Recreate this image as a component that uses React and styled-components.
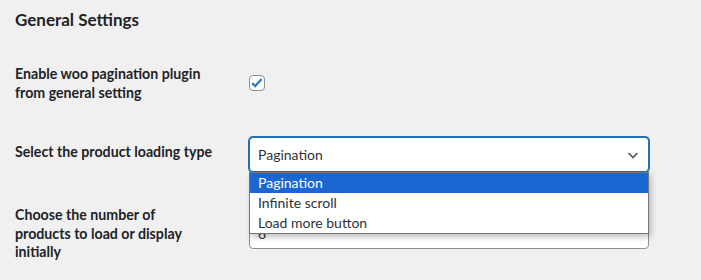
import React from "react";
import styled, { createGlobalStyle } from "styled-components";

const Global = createGlobalStyle`
  html, body { margin: 0; padding: 0; background: #f0f0f1; }
  body { font-family: Lato, "Noto Sans", sans-serif; color: #1d2327; }
`;

const Page = styled.div`
  padding: 7px 15px 0 15px;
  width: 701px;
  height: 280px;
  box-sizing: border-box;
  overflow: hidden;
`;

const Title = styled.h2`
  margin: 0;
  font-size: 17px;
  font-weight: 700;
  line-height: 26px;
  color: #1d2327;
`;

const Table = styled.div`
  display: grid;
  grid-template-columns: 234px 400px;
  margin-top: ${(p) => p.$top}px;
`;

const Label = styled.div`
  font-size: 14.2px;
  font-weight: 700;
  line-height: 18.5px;
  color: #1d2327;
  padding-top: ${(p) => p.$pt || 0}px;
  width: ${(p) => p.$w || 200}px;
`;

const Cell = styled.div`
  padding-top: ${(p) => p.$pt || 0}px;
`;

const Anchor = styled.div`
  position: relative;
`;

const Check = styled.span`
  display: flex;
  align-items: center;
  justify-content: center;
  width: 16px;
  height: 16px;
  box-sizing: border-box;
  border: 1px solid #8c8f94;
  border-radius: 4px;
  background: #fff;
`;

const SelectBox = styled.div`
  box-sizing: border-box;
  height: 35px;
  border: 1px solid #2271b1;
  box-shadow: 0 0 0 1px #2271b1;
  border-radius: 4px;
  background: #fff;
  display: flex;
  align-items: center;
  justify-content: space-between;
  padding: 0 9px 0 8px;
  font-size: 14px;
  color: #2c3338;
`;

const Menu = styled.ul`
  position: absolute;
  left: 0;
  top: 35px;
  width: 400px;
  margin: 0;
  padding: 0;
  list-style: none;
  box-sizing: border-box;
  border: 1px solid #767676;
  background: #fff;
  box-shadow: 2px 3px 6px rgba(0, 0, 0, 0.25);
  z-index: 5;
`;

const Item = styled.li`
  height: 20px;
  line-height: 20px;
  padding-left: 8px;
  font-size: 14px;
  color: ${(p) => (p.$active ? "#fff" : "#2c3338")};
  background: ${(p) => (p.$active ? "#1a67d2" : "#fff")};
`;

const Input = styled.div`
  box-sizing: border-box;
  height: 30px;
  border: 1px solid #8c8f94;
  border-radius: 4px;
  background: #fff;
  padding: 0 8px;
  font-size: 14px;
  line-height: 28px;
  color: #2c3338;
`;

export default function App() {
  return (
    <Page>
      <Global />
      <Title>General Settings</Title>
      <Table $top={32}>
        <Label $w={200}>Enable woo pagination plugin from general setting</Label>
        <Cell $pt={10}>
          <Check>
            <svg width="14" height="14" viewBox="0 0 14 14">
              <path d="M2.2 7.2l3 2.9L11.6 3" fill="none" stroke="#3582c4" strokeWidth="2.4" />
            </svg>
          </Check>
        </Cell>
        <Label $pt={41}>Select the product loading type</Label>
        <Cell $pt={35}>
          <Anchor>
            <SelectBox>
              <span>Pagination</span>
              <svg width="12" height="12" viewBox="0 0 12 12">
                <path d="M1.5 4l4.5 4.5L10.5 4" fill="none" stroke="#50575e" strokeWidth="1.6" />
              </svg>
            </SelectBox>
            <Menu>
              <Item $active>Pagination</Item>
              <Item>Infinite scroll</Item>
              <Item>Load more button</Item>
            </Menu>
          </Anchor>
        </Cell>
        <Label $pt={34} $w={180}>Choose the number of products to load or display initially</Label>
        <Cell $pt={47}>
          <Input>6</Input>
        </Cell>
      </Table>
    </Page>
  );
}
